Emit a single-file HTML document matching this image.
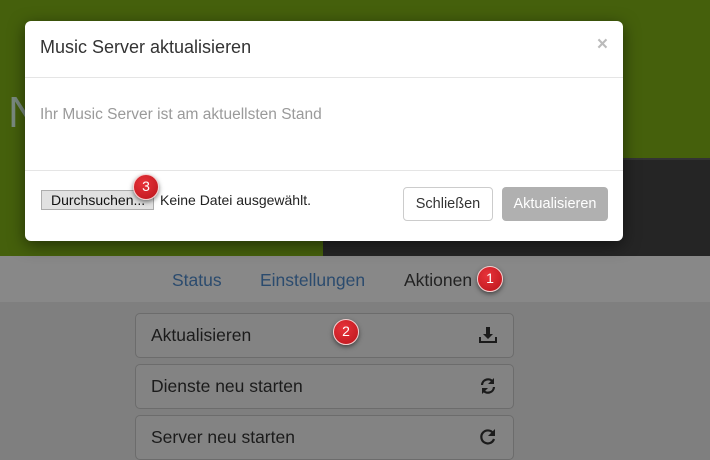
<!DOCTYPE html>
<html><head><meta charset="utf-8"><style>
*{margin:0;padding:0;box-sizing:border-box}
body{width:710px;height:459px;overflow:hidden;position:relative;background:#7f7f7f;font-family:"Liberation Sans",sans-serif}
.green{position:absolute;left:0;top:0;width:710px;height:256px;background:#45600c}
.dark{position:absolute;left:323px;top:158px;width:387px;height:98px;background:#252525;border-top:2px solid #333}
.nav{position:absolute;left:0;top:256px;width:710px;height:46px;background:#888}
.nav span{position:absolute;top:14px;font-size:17.5px}
.item{position:absolute;left:135px;width:379px;height:45px;border:1px solid #6c6c6c;border-radius:5px;background:#838383}
.item span{position:absolute;left:15px;top:11px;font-size:17.5px;color:#1b1b1b}
.item svg{position:absolute;right:16px;top:12px}
.modal{position:absolute;left:25px;top:21px;width:598px;height:220px;background:#fff;border-radius:6px;box-shadow:0 4px 16px rgba(0,0,0,.5)}
.hdr{height:57px;border-bottom:1px solid #e5e5e5;position:relative}
.hdr h4{position:absolute;left:15px;top:16px;font-weight:normal;font-size:18px;color:#333}
.x{position:absolute;right:15px;top:13px;font-size:19px;font-weight:bold;color:#bbb}
.bd{height:93px;border-bottom:1px solid #e5e5e5;position:relative}
.bd p{position:absolute;left:15px;top:28px;font-size:15.5px;color:#9a9a9a}
.fb{position:absolute;left:16px;top:169px;width:113px;height:20px;background:#e1e1e1;border:1px solid #adadad;font-size:14px;padding:1px 0 0 9px;color:#111;white-space:nowrap;overflow:hidden}
.ft{position:absolute;left:135px;top:171px;font-size:14px;color:#222}
.b1{position:absolute;left:378px;top:166px;width:90px;height:34px;border:1px solid #ccc;border-radius:4px;font-size:14.5px;color:#333;text-align:center;line-height:32px}
.b2{position:absolute;left:477px;top:166px;width:106px;height:34px;border-radius:4px;background:#b0b0b0;font-size:14.5px;color:#fff;text-align:center;line-height:34px}
.badge{position:absolute;width:26px;height:26px;border-radius:50%;background:radial-gradient(circle at 40% 35%,#e8333a,#b9141b);border:1.5px solid #f5d0d0;color:#fff;font-size:14px;text-align:center;line-height:23px;box-shadow:0 2px 5px rgba(0,0,0,.5)}
</style></head><body>
<div class="green"></div>
<div style="position:absolute;left:8px;top:88px;font-size:44px;color:#7a8a80">N</div>
<div class="dark"></div>
<div class="nav">
<span style="left:172px;color:#2b4b6e">Status</span>
<span style="left:260px;color:#2b4b6e">Einstellungen</span>
<span style="left:404px;color:#222">Aktionen</span>
</div>
<div class="item" style="top:313px"><span>Aktualisieren</span>
<svg width="18" height="18" viewBox="0 0 18 18"><path d="M7 1h4v7h3l-5 5-5-5h3z" fill="#1b1b1b"/><path d="M1 11v5h16v-5" fill="none" stroke="#1b1b1b" stroke-width="2"/></svg></div>
<div class="item" style="top:364px"><span>Dienste neu starten</span>
<svg width="18" height="18" viewBox="0 0 18 18"><path d="M3 8a6 6 0 0 1 11-3M15 10a6 6 0 0 1-11 3" fill="none" stroke="#1b1b1b" stroke-width="2.2"/><path d="M15 1v6h-6z M3 17v-6h6z" fill="#1b1b1b"/></svg></div>
<div class="item" style="top:415px"><span>Server neu starten</span>
<svg width="18" height="18" viewBox="0 0 18 18"><path d="M14 5a6.5 6.5 0 1 0 1 6" fill="none" stroke="#1b1b1b" stroke-width="2.2"/><path d="M16 1v7h-7z" fill="#1b1b1b"/></svg></div>
<div class="modal">
<div class="hdr"><h4>Music Server aktualisieren</h4><span class="x">×</span></div>
<div class="bd"><p>Ihr Music Server ist am aktuellsten Stand</p></div>
<div class="fb">Durchsuchen...</div>
<div class="ft">Keine Datei ausgewählt.</div>
<div class="b1">Schließen</div>
<div class="b2">Aktualisieren</div>
</div>
<div class="badge" style="left:477px;top:266px">1</div>
<div class="badge" style="left:333px;top:319px">2</div>
<div class="badge" style="left:133px;top:174px">3</div>
</body></html>
